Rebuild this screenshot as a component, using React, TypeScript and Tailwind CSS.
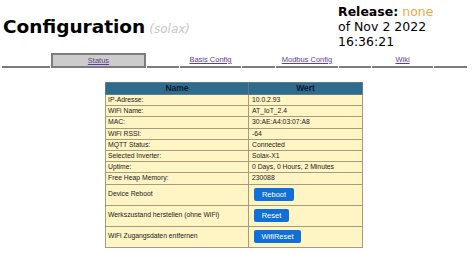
import React from "react";

const tabs = [
  { label: "Status", active: true, w: "w-[95px]" },
  { label: "Basis Config", active: false, w: "w-[61px]" },
  { label: "Modbus Config", active: false, w: "w-[62px]" },
  { label: "Wiki", active: false, w: "w-[61px]" },
];

const spacerWidths = ["w-[48px]", "w-[32px]", "w-[33px]", "w-[32px]", "w-[33px]"];

const rows: [string, string][] = [
  ["IP-Adresse:", "10.0.2.93"],
  ["WiFi Name:", "AT_IoT_2.4"],
  ["MAC:", "30:AE:A4:03:07:A8"],
  ["WiFi RSSI:", "-64"],
  ["MQTT Status:", "Connected"],
  ["Selected Inverter:", "Solax-X1"],
  ["Uptime:", "0 Days, 0 Hours, 2 Minutes"],
  ["Free Heap Memory:", "230088"],
];

const actions = [
  { label: "Device Reboot", btn: "Reboot", w: "w-[40px]" },
  { label: "Werkszustand herstellen (ohne WiFi)", btn: "Reset", w: "w-[35px]" },
  { label: "WiFi Zugangsdaten entfernen", btn: "WifiReset", w: "w-[47px]" },
];

const cell = "border border-[#a59c7c] bg-[#fff4c4] px-[2px] text-left align-middle";

const Spacer = ({ w }: { w: string }) => (
  <div className={`${w} h-[15px] border-b-2 border-[#7c7c7c]`} />
);

export default function App() {
  return (
    <div className="w-[474px] h-[253px] bg-white overflow-hidden font-['DejaVu_Sans',sans-serif] text-black">
      {/* Kopfzeile */}
      <div className="flex">
        <div className="w-[335px] pl-[3px] pt-[16px]">
          <span className="text-[18.5px] font-bold leading-none">Configuration</span>
          <span className="ml-[4px] text-[12px] italic text-[#c8c8c8]">(solax)</span>
        </div>
        <div className="pl-[3px] pt-[4px] text-[12.5px] leading-[15px]">
          <div>
            <span className="font-bold">Release:</span>{" "}
            <span className="text-[#f3a83a]">none</span>
          </div>
          <div>of Nov 2 2022</div>
          <div>16:36:21</div>
        </div>
      </div>

      {/* Tabs */}
      <div className="mt-[4px] ml-[2px] flex items-end gap-[1px]">
        <Spacer w={spacerWidths[0]} />
        {tabs.map((t, i) => (
          <React.Fragment key={t.label}>
            <div
              className={`${t.w} h-[15px] flex items-center justify-center text-[7.5px] font-['Liberation_Sans',sans-serif] ${
                t.active
                  ? "border-2 border-[#7c7c7c] bg-[#cccccc]"
                  : "border-b-2 border-[#7c7c7c]"
              }`}
            >
              <a className="underline text-[#5b3e98] leading-none">{t.label}</a>
            </div>
            <Spacer w={spacerWidths[i + 1]} />
          </React.Fragment>
        ))}
      </div>

      {/* Tabelle */}
      <div className="mt-[14px] ml-[105px]">
        <table className="border-collapse w-[257px] table-fixed font-['Liberation_Sans',sans-serif] text-[6.8px] text-[#222]">
          <colgroup>
            <col className="w-[143px]" />
            <col className="w-[114px]" />
          </colgroup>
          <thead>
            <tr className="h-[12px]">
              <th className="border border-[#5d7d8d] bg-[#2f6b8d] text-[8.5px] font-bold text-[#0c1a30] text-center leading-none">
                Name
              </th>
              <th className="border border-[#5d7d8d] bg-[#2f6b8d] text-[8.5px] font-bold text-[#0c1a30] text-center leading-none">
                Wert
              </th>
            </tr>
          </thead>
          <tbody>
            {rows.map(([k, v]) => (
              <tr key={k} className="h-[11px]">
                <td className={cell}>{k}</td>
                <td className={`${cell} pl-[3px]`}>{v}</td>
              </tr>
            ))}
            {actions.map((a) => (
              <tr key={a.label} className="h-[21px]">
                <td className={cell}>{a.label}</td>
                <td className={`${cell} pl-[5px]`}>
                  <button
                    className={`${a.w} h-[13px] rounded-[2px] bg-[#1170d8] text-white text-[7.5px] leading-none flex items-center justify-center`}
                  >
                    {a.btn}
                  </button>
                </td>
              </tr>
            ))}
          </tbody>
        </table>
      </div>
    </div>
  );
}
